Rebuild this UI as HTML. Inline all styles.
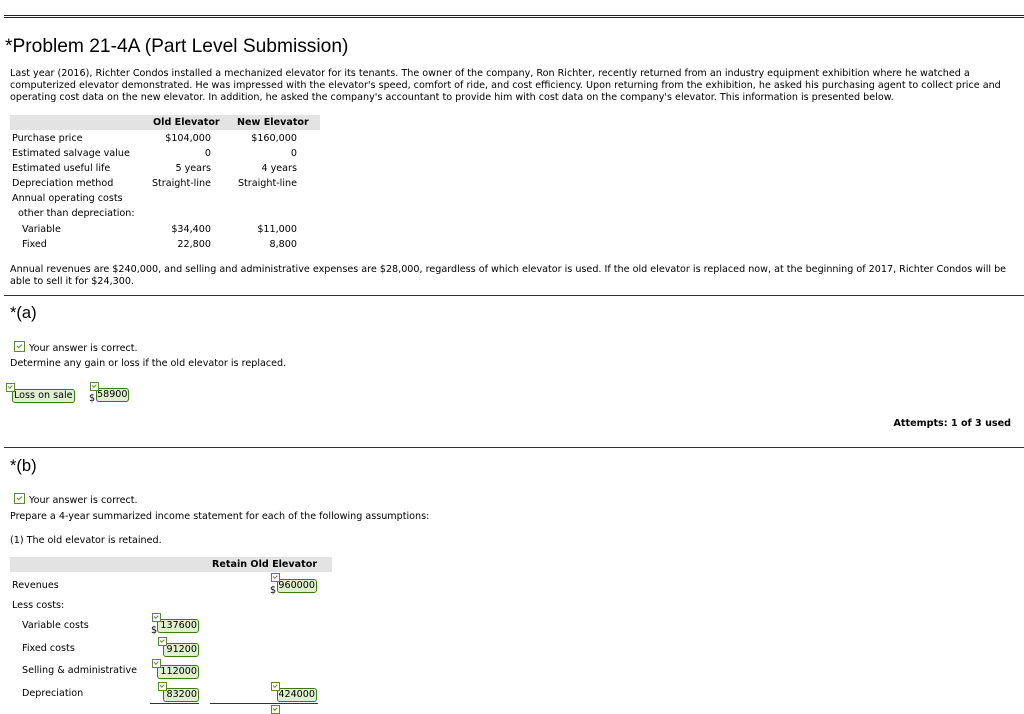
<!DOCTYPE html>
<html><head><meta charset="utf-8"><style>
body{margin:0;width:1024px;height:709px;background:#fff;position:relative;overflow:hidden;font-family:"DejaVu Sans","Liberation Sans",sans-serif;font-size:9.6px;color:#000}
.t{position:absolute;white-space:nowrap;line-height:12px;margin-top:2px}
.r{text-align:right}
.hr{position:absolute;background:#333;height:1px}
.h{font-family:"Liberation Sans",sans-serif;position:absolute;white-space:nowrap}
.cb{position:absolute;width:9px;height:9px;border:1px solid #5a8a2a;background:#fff}
.cb:after{content:"";position:absolute;left:2px;width:4px;height:2px;border-left:1px solid #5a8a2a;border-bottom:1px solid #5a8a2a;transform:rotate(-45deg);top:2px}
.bx{position:absolute;height:12px;border:1.5px solid #3d7a14;border-radius:3px;background:#dff0d0;line-height:12px;text-align:right;padding-right:1px;box-sizing:content-box;white-space:nowrap;overflow:hidden}
.sm{width:7px;height:7px}
.sm:after{left:1px;top:1px;width:3px;height:1.5px}
</style></head><body>
<div class="hr" style="left:4px;right:0;top:15px;height:1px;background:#222"></div>
<div class="hr" style="left:4px;right:0;top:17px;height:1px;background:#222"></div>
<div class="h" style="left:5px;top:36px;font-size:19.2px">*Problem 21-4A (Part Level Submission)</div>
<div class="t" style="left:10px;top:66px">Last year (2016), Richter Condos installed a mechanized elevator for its tenants. The owner of the company, Ron Richter, recently returned from an industry equipment exhibition where he watched a</div>
<div class="t" style="left:10px;top:78px">computerized elevator demonstrated. He was impressed with the elevator's speed, comfort of ride, and cost efficiency. Upon returning from the exhibition, he asked his purchasing agent to collect price and</div>
<div class="t" style="left:10px;top:90px">operating cost data on the new elevator. In addition, he asked the company's accountant to provide him with cost data on the company's elevator. This information is presented below.</div>
<div style="position:absolute;left:10px;top:115px;width:310px;height:15px;background:#e3e3e3"></div>
<div class="t" style="left:153px;top:115px;font-weight:bold">Old Elevator</div>
<div class="t" style="left:237px;top:115px;font-weight:bold">New Elevator</div>
<div class="t" style="left:12px;top:131px">Purchase price</div>
<div class="t" style="left:12px;top:146px">Estimated salvage value</div>
<div class="t" style="left:12px;top:161px">Estimated useful life</div>
<div class="t" style="left:12px;top:176px">Depreciation method</div>
<div class="t" style="left:12px;top:191px">Annual operating costs</div>
<div class="t" style="left:18px;top:206px">other than depreciation:</div>
<div class="t" style="left:22px;top:222px">Variable</div>
<div class="t" style="left:22px;top:237px">Fixed</div>
<div class="t r" style="left:130px;width:81px;top:131px">$104,000</div>
<div class="t r" style="left:130px;width:81px;top:146px">0</div>
<div class="t r" style="left:130px;width:81px;top:161px">5 years</div>
<div class="t r" style="left:130px;width:81px;top:176px">Straight-line</div>
<div class="t r" style="left:130px;width:81px;top:222px">$34,400</div>
<div class="t r" style="left:130px;width:81px;top:237px">22,800</div>
<div class="t r" style="left:220px;width:77px;top:131px">$160,000</div>
<div class="t r" style="left:220px;width:77px;top:146px">0</div>
<div class="t r" style="left:220px;width:77px;top:161px">4 years</div>
<div class="t r" style="left:220px;width:77px;top:176px">Straight-line</div>
<div class="t r" style="left:220px;width:77px;top:222px">$11,000</div>
<div class="t r" style="left:220px;width:77px;top:237px">8,800</div>
<div class="t" style="left:10px;top:262px">Annual revenues are $240,000, and selling and administrative expenses are $28,000, regardless of which elevator is used. If the old elevator is replaced now, at the beginning of 2017, Richter Condos will be</div>
<div class="t" style="left:10px;top:274px">able to sell it for $24,300.</div>
<div class="hr" style="left:4px;right:0;top:295px"></div>
<div class="h" style="left:10px;top:304px;font-size:16.5px">*(a)</div>
<div class="cb" style="left:14px;top:341px"></div>
<div class="t" style="left:29px;top:341px">Your answer is correct.</div>
<div class="t" style="left:10px;top:356px">Determine any gain or loss if the old elevator is replaced.</div>
<div class="bx" style="left:12px;top:389px;width:59px;text-align:left;padding:0 1px">Loss on sale</div>
<div class="cb sm" style="left:6px;top:383px"></div>
<div class="t" style="left:89px;top:391px">$</div>
<div class="bx" style="left:96px;top:388px;width:30px">58900</div>
<div class="cb sm" style="left:90px;top:382px"></div>
<div class="t" style="right:13px;top:416px;font-weight:bold">Attempts: 1 of 3 used</div>
<div class="hr" style="left:4px;right:0;top:447px"></div>
<div class="h" style="left:10px;top:457px;font-size:16.5px">*(b)</div>
<div class="cb" style="left:14px;top:493px"></div>
<div class="t" style="left:29px;top:493px">Your answer is correct.</div>
<div class="t" style="left:10px;top:509px">Prepare a 4-year summarized income statement for each of the following assumptions:</div>
<div class="t" style="left:10px;top:533px">(1) The old elevator is retained.</div>
<div style="position:absolute;left:10px;top:557px;width:322px;height:15px;background:#e3e3e3"></div>
<div class="t" style="left:212px;top:557px;font-weight:bold">Retain Old Elevator</div>
<div class="t" style="left:12px;top:578px">Revenues</div>
<div class="t" style="left:12px;top:598px">Less costs:</div>
<div class="t" style="left:22px;top:618px">Variable costs</div>
<div class="t" style="left:22px;top:641px">Fixed costs</div>
<div class="t" style="left:22px;top:663px">Selling &amp; administrative</div>
<div class="t" style="left:22px;top:686px">Depreciation</div>
<div class="t" style="left:270px;top:583px">$</div>
<div class="bx" style="left:277px;top:579px;width:37px">960000</div>
<div class="cb sm" style="left:271px;top:573px"></div>
<div class="t" style="left:151px;top:623px">$</div>
<div class="bx" style="left:157px;top:619px;width:39px">137600</div>
<div class="cb sm" style="left:152px;top:613px"></div>
<div class="bx" style="left:163px;top:643px;width:33px">91200</div>
<div class="cb sm" style="left:158px;top:637px"></div>
<div class="bx" style="left:157px;top:665px;width:39px">112000</div>
<div class="cb sm" style="left:152px;top:659px"></div>
<div class="bx" style="left:163px;top:688px;width:33px">83200</div>
<div class="cb sm" style="left:158px;top:682px"></div>
<div class="bx" style="left:277px;top:688px;width:37px">424000</div>
<div class="cb sm" style="left:271px;top:682px"></div>
<div class="hr" style="left:150px;width:49px;top:703px"></div>
<div class="hr" style="left:210px;width:108px;top:703px"></div>
<div class="cb sm" style="left:271px;top:705px"></div>
</body></html>
